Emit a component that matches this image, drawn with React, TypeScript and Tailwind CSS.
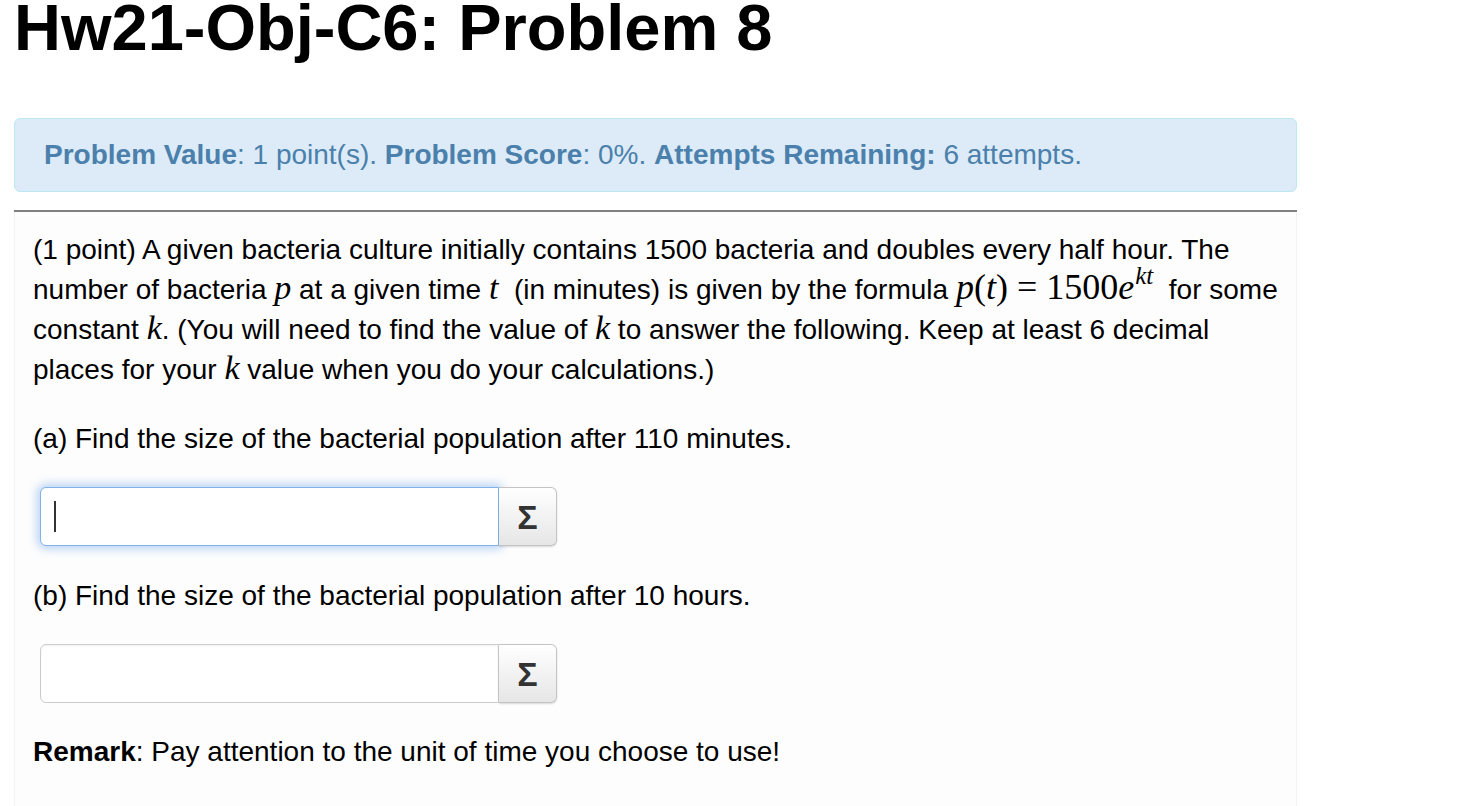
import React from 'react';

const serif = { fontFamily: '"Liberation Serif", "DejaVu Serif", serif' };

const AnswerField: React.FC<{ focused?: boolean }> = ({ focused }) => (
  <div className="flex h-[59px] w-[517px]">
    <div
      className={
        focused
          ? 'flex-1 rounded-l-[6px] border border-[#80b3ea] bg-white shadow-[0_0_10px_3px_rgba(102,160,236,0.45)] flex items-center pl-[13px]'
          : 'flex-1 rounded-l-[6px] border border-[#cccccc] bg-white shadow-[inset_0_1px_2px_rgba(0,0,0,0.06)]'
      }
    >
      {focused && <span className="block w-[1.5px] h-[31px] bg-[#333]" />}
    </div>
    <button className="w-[58px] rounded-r-[6px] border border-l-0 border-[#c4c4c4] bg-gradient-to-b from-white to-[#e6e6e6] flex items-center justify-center text-[34px] leading-none font-bold text-[#333] shadow-[0_1px_2px_rgba(0,0,0,0.15)]">
      Σ
    </button>
  </div>
);

const M: React.FC<{ children: React.ReactNode }> = ({ children }) => (
  <i style={serif} className="text-[34px] leading-[0]">
    {children}
  </i>
);

export default function App() {
  return (
    <div className="min-h-screen bg-white" style={{ fontFamily: '"Liberation Sans", Arial, sans-serif' }}>
      <div className="w-[1283px] ml-[14px]">
        <h1 className="text-[65px] font-bold leading-[62px] -mt-[3px] text-black">Hw21-Obj-C6: Problem 8</h1>

        <div className="mt-[59px] h-[74px] rounded-[6px] border border-[#bce8f1] bg-[#dcebf7] flex items-center pl-[29px] text-[28px] text-[#4a80ab]">
          <span>
            <b>Problem Value</b>: 1 point(s). <b>Problem Score</b>: 0%. <b>Attempts Remaining:</b> 6 attempts.
          </span>
        </div>

        <div className="mt-[18px] border-t-2 border-[#808080]" />

        <div className="bg-[#fdfdfd] border-l border-r border-[#f3f3f3] pl-[18px] pt-[18px] pb-[60px] text-[28px] text-black">
          <p className="leading-[40px] w-[1262px]">
            (1 point) A given bacteria culture initially contains 1500 bacteria and doubles every half hour. The
            number of bacteria <M>p</M> at a given time <M>t</M>&nbsp; (in minutes) is given by the formula{' '}
            <span style={serif} className="text-[36px] leading-[0]">
              <i>p</i>(<i>t</i>) = 1500<i>e</i>
              <span className="text-[25px] relative -top-[15px] ml-[1px]">
                <i>kt</i>
              </span>
            </span>
            &nbsp; for some constant <M>k</M>. (You will need to find the value of <M>k</M> to answer the following. Keep
            at least 6 decimal places for your <M>k</M> value when you do your calculations.)
          </p>

          <p className="mt-[29px] leading-[40px]">(a) Find the size of the bacterial population after 110 minutes.</p>
          <div className="mt-[28px] ml-[7px]">
            <AnswerField focused />
          </div>

          <p className="mt-[30px] leading-[40px]">(b) Find the size of the bacterial population after 10 hours.</p>
          <div className="mt-[28px] ml-[7px]">
            <AnswerField />
          </div>

          <p className="mt-[29px] leading-[40px]">
            <b>Remark</b>: Pay attention to the unit of time you choose to use!
          </p>
        </div>
      </div>
    </div>
  );
}
